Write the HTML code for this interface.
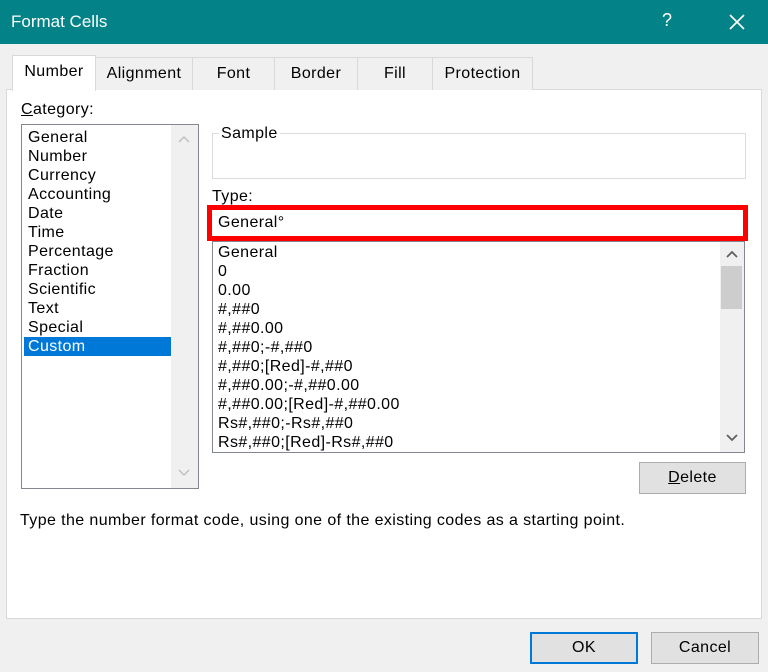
<!DOCTYPE html>
<html><head><style>
*{box-sizing:border-box;margin:0;padding:0}
body{width:768px;height:672px;background:#f0f0f0;font-family:"Liberation Sans",sans-serif;font-size:16px;letter-spacing:0.4px;color:#000;position:relative;overflow:hidden}
.a{position:absolute}
.title{left:0;top:0;width:768px;height:44px;background:#038387;color:#fff;letter-spacing:0}
.tab{top:57px;height:33px;border:1px solid #d9d9d9;border-bottom:none;background:#f0f0f0;text-align:center;line-height:32px}
.panel{left:6px;top:89px;width:756px;height:530px;background:#fff;border:1px solid #d9d9d9}
.list div{height:19px;line-height:19px;white-space:nowrap}
.btn{background:#e1e1e1;border:1px solid #adadad;text-align:center;line-height:29px}
</style></head><body>
<div class="a title"><span class="a" style="left:11px;top:12px;font-size:17px">Format Cells</span>
<span class="a" style="left:662px;top:10px;font-size:18px">?</span>
<svg class="a" style="left:728px;top:13px" width="18" height="18"><path d="M2 2L16 16M16 2L2 16" stroke="#fff" stroke-width="1.6"/></svg></div>
<div class="a panel"></div>
<div class="a tab" style="left:12px;width:84px;top:55px;height:36px;background:#fff;z-index:2">Number</div>
<div class="a tab" style="left:95px;width:98px">Alignment</div>
<div class="a tab" style="left:192px;width:83px">Font</div>
<div class="a tab" style="left:274px;width:84px">Border</div>
<div class="a tab" style="left:357px;width:76px">Fill</div>
<div class="a tab" style="left:432px;width:101px">Protection</div>
<div class="a" style="left:21px;top:101px"><u>C</u>ategory:</div>
<div class="a list" style="left:21px;top:124px;width:178px;height:365px;border:1px solid #828790;padding:3px 0 0 2px">
<div style="padding-left:4px">General</div><div style="padding-left:4px">Number</div><div style="padding-left:4px">Currency</div><div style="padding-left:4px">Accounting</div><div style="padding-left:4px">Date</div><div style="padding-left:4px">Time</div><div style="padding-left:4px">Percentage</div><div style="padding-left:4px">Fraction</div><div style="padding-left:4px">Scientific</div><div style="padding-left:4px">Text</div><div style="padding-left:4px">Special</div>
<div style="padding-left:4px;background:#0078d7;color:#fff;width:147px">Custom</div>
<div class="a" style="left:149px;top:0;width:27px;height:363px;background:#f0f0f0"></div>
<svg class="a" style="left:156px;top:10px" width="12" height="8"><path d="M1 7L6 2L11 7" stroke="#c0c0c0" fill="none" stroke-width="1.5"/></svg>
<svg class="a" style="left:156px;top:344px" width="12" height="8"><path d="M1 1L6 6L11 1" stroke="#c0c0c0" fill="none" stroke-width="1.5"/></svg>
</div>
<div class="a" style="left:212px;top:133px;width:534px;height:46px;border:1px solid #dcdcdc"></div>
<div class="a" style="left:219px;top:125px;background:#fff;padding:0 2px">Sample</div>
<div class="a" style="left:212px;top:188px">Type:</div>
<div class="a" style="left:207px;top:205px;width:541px;height:36px;border:5px solid #f00;background:#fff;padding:4px 0 0 6px">General°</div>
<div class="a list" style="left:212px;top:241px;width:533px;height:212px;border:1px solid #828790;padding:1px 0 0 5px">
<div>General</div><div>0</div><div>0.00</div><div>#,##0</div><div>#,##0.00</div><div>#,##0;-#,##0</div><div>#,##0;[Red]-#,##0</div><div>#,##0.00;-#,##0.00</div><div>#,##0.00;[Red]-#,##0.00</div><div>Rs#,##0;-Rs#,##0</div><div>Rs#,##0;[Red]-Rs#,##0</div>
<div class="a" style="left:507px;top:0;width:24px;height:210px;background:#f0f0f0"></div>
<div class="a" style="left:508px;top:24px;width:21px;height:43px;background:#cdcdcd"></div>
<svg class="a" style="left:513px;top:8px" width="12" height="8"><path d="M1 7L6 2L11 7" stroke="#606060" fill="none" stroke-width="1.8"/></svg>
<svg class="a" style="left:513px;top:192px" width="12" height="8"><path d="M1 1L6 6L11 1" stroke="#606060" fill="none" stroke-width="1.8"/></svg>
</div>
<div class="a btn" style="left:639px;top:462px;width:107px;height:32px"><u>D</u>elete</div>
<div class="a" style="left:20px;top:512px">Type the number format code, using one of the existing codes as a starting point.</div>
<div class="a btn" style="left:530px;top:632px;width:108px;height:32px;border:2px solid #0078d7;line-height:28px">OK</div>
<div class="a btn" style="left:651px;top:632px;width:108px;height:32px">Cancel</div>
</body></html>
